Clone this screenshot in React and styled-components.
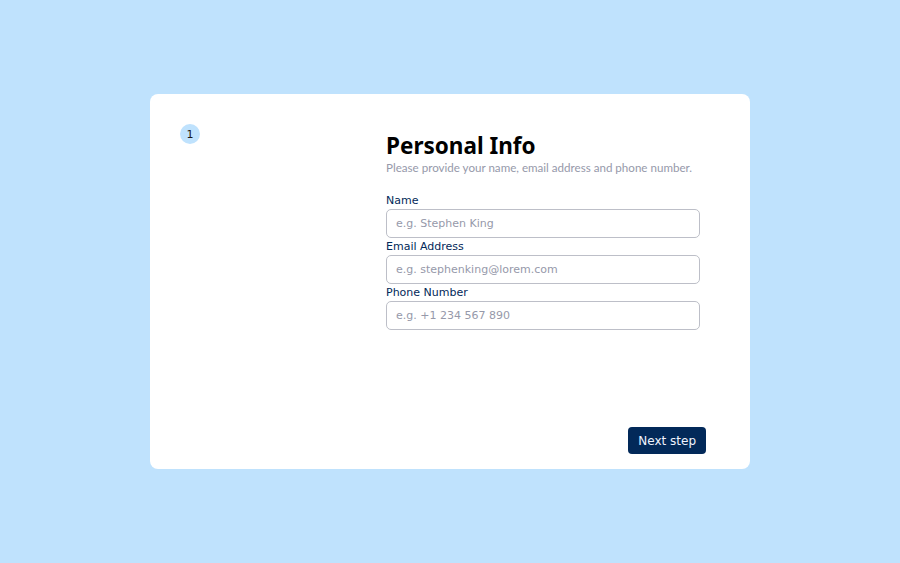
import styled, { createGlobalStyle } from "styled-components";

const fields = [
  { id: "name", label: "Name", type: "text", placeholder: "e.g. Stephen King" },
  { id: "email", label: "Email Address", type: "email", placeholder: "e.g. stephenking@lorem.com" },
  { id: "phone", label: "Phone Number", type: "tel", placeholder: "e.g. +1 234 567 890" },
];

const App = () => {
  return (
    <>
      <GlobalStyle />
      <Page>
        <Card>
          <Sidebar>
            <StepBadge>1</StepBadge>
          </Sidebar>
          <Main>
            <Title>Personal Info</Title>
            <Subtitle>Please provide your name, email address and phone number.</Subtitle>
            <Form onSubmit={(e) => e.preventDefault()}>
              {fields.map((f) => (
                <Field key={f.id}>
                  <Label htmlFor={f.id}>{f.label}</Label>
                  <Input id={f.id} type={f.type} placeholder={f.placeholder} />
                </Field>
              ))}
            </Form>
            <Footer>
              <NextButton type="button">Next step</NextButton>
            </Footer>
          </Main>
        </Card>
      </Page>
    </>
  );
};

export default App;

/* ---------------------------- Styled Components --------------------------- */

const GlobalStyle = createGlobalStyle`
  * {
    box-sizing: border-box;
  }

  body {
    margin: 0;
    background-color: #bfe2fd;
    font-family: "DejaVu Sans", sans-serif;
  }
`;

const Page = styled.div`
  height: 563px;
  display: flex;
  align-items: center;
  justify-content: center;
`;

const Card = styled.div`
  width: 600px;
  height: 375px;
  background-color: #fff;
  border-radius: 8px;
  display: flex;
`;

const Sidebar = styled.aside`
  width: 236px;
  padding: 30px;
`;

const StepBadge = styled.div`
  width: 20px;
  height: 20px;
  border-radius: 50%;
  background-color: #bfe2fd;
  color: #1a1a1a;
  font-size: 11px;
  display: flex;
  align-items: center;
  justify-content: center;
`;

const Main = styled.main`
  width: 320px;
  padding: 40px 0 15px;
  display: flex;
  flex-direction: column;
`;

const Title = styled.h1`
  margin: 0;
  font-family: "Noto Sans", sans-serif;
  font-size: 22.5px;
  line-height: 24px;
  font-weight: 700;
  color: #000;
`;

const Subtitle = styled.p`
  margin: 2px 0 0;
  font-family: "Lato", sans-serif;
  font-size: 11.6px;
  line-height: 16px;
  color: #9699aa;
  white-space: nowrap;
`;

const Form = styled.form`
  margin-top: 16px;
  display: flex;
  flex-direction: column;
`;

const Field = styled.div`
  display: flex;
  flex-direction: column;
`;

const Label = styled.label`
  font-size: 11px;
  line-height: 17px;
  color: #022959;
`;

const Input = styled.input`
  width: 314px;
  height: 29px;
  padding: 0 9px;
  border: 1px solid #bdbfc8;
  border-radius: 5px;
  font-family: "DejaVu Sans", sans-serif;
  font-size: 11px;
  color: #022959;
  outline: none;

  &::placeholder {
    color: #9699aa;
  }
`;

const Footer = styled.div`
  margin-top: auto;
  display: flex;
  justify-content: flex-end;
`;

const NextButton = styled.button`
  height: 27px;
  padding: 0 10px;
  border: none;
  border-radius: 4px;
  background-color: #022959;
  color: #f0f4ff;
  font-family: "DejaVu Sans", sans-serif;
  font-size: 12px;
  cursor: pointer;
`;
